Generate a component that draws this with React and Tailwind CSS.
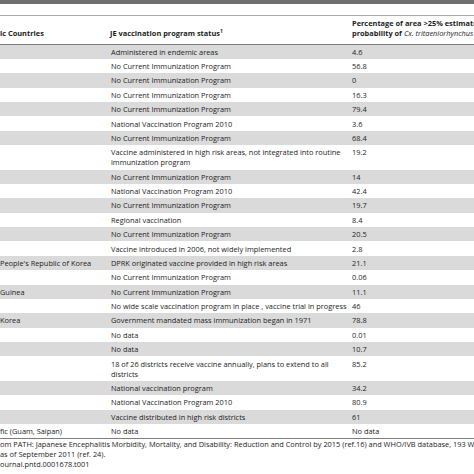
import React from 'react'

// rows: [country fragment, status, value]
const filas = [
  ['', 'Administered in endemic areas', '4.6'],
  ['', 'No Current Immunization Program', '56.8'],
  ['', 'No Current Immunization Program', '0'],
  ['', 'No Current Immunization Program', '16.3'],
  ['', 'No Current Immunization Program', '79.4'],
  ['', 'National Vaccination Program 2010', '3.6'],
  ['', 'No Current Immunization Program', '68.4'],
  ['', 'Vaccine administered in high risk areas, not integrated into routine immunization program', '19.2'],
  ['', 'No Current Immunization Program', '14'],
  ['', 'National Vaccination Program 2010', '42.4'],
  ['', 'No Current Immunization Program', '19.7'],
  ['', 'Regional vaccination', '8.4'],
  ['', 'No Current Immunization Program', '20.5'],
  ['', 'Vaccine introduced in 2006, not widely implemented', '2.8'],
  ["People's Republic of Korea", 'DPRK originated vaccine provided in high risk areas', '21.1'],
  ['', 'No Current Immunization Program', '0.06'],
  ['Guinea', 'No Current Immunization Program', '11.1'],
  ['', 'No wide scale vaccination program in place , vaccine trial in progress', '46'],
  ['Korea', 'Government mandated mass immunization began in 1971', '78.8'],
  ['', 'No data', '0.01'],
  ['', 'No data', '10.7'],
  ['', '18 of 26 districts receive vaccine annually, plans to extend to all districts', '85.2'],
  ['', 'National vaccination program', '34.2'],
  ['', 'National Vaccination Program 2010', '80.9'],
  ['', 'Vaccine distributed in high risk districts', '61'],
  ['fic (Guam, Saipan)', 'No data', 'No data'],
]

export default function App() {
  return (
    <div
      className="w-[474px] h-[474px] overflow-hidden bg-white text-[#1c1c1c] text-[7.4px] leading-[10px]"
      style={{ fontFamily: '"Open Sans", "DejaVu Sans", sans-serif' }}
    >
      <div className="h-[4px] bg-[#6f6f6f]"></div>
      <div className="h-[11px]"></div>

      {/* cabecera */}
      <div className="flex items-end border-t border-[#a8a8a8] border-b-[1.5px] border-b-[#7d7d7d] h-[29.5px] pb-[6px] font-bold">
        <div className="w-[110px] shrink-0 whitespace-nowrap">ic Countries</div>
        <div className="w-[242px] shrink-0 whitespace-nowrap">
          JE vaccination program status<sup className="text-[5px] leading-none">1</sup>
        </div>
        <div className="whitespace-nowrap">
          <div>Percentage of area &gt;25% estimated</div>
          <div>
            probability of <span className="italic font-normal">Cx. tritaeniorhynchus</span> presence
          </div>
        </div>
      </div>

      {/* filas */}
      <div className="border-b-[1.5px] border-[#7d7d7d]">
        {filas.map((f, i) => (
          <div key={i} className={`flex py-[2.2px] ${i % 2 === 0 ? 'bg-[#dadada]' : 'bg-white'}`}>
            <div className="w-[110px] shrink-0 whitespace-nowrap overflow-hidden">{f[0]}</div>
            <div className="w-[242px] shrink-0 pl-[1px] pr-[3px]">{f[1]}</div>
            <div className="whitespace-nowrap">{f[2]}</div>
          </div>
        ))}
      </div>

      {/* nota */}
      <div className="whitespace-nowrap pt-[0px]">
        <div>om PATH: Japanese Encephalitis Morbidity, Mortality, and Disability: Reduction and Control by 2015 (ref.16) and WHO/IVB database, 193 WHO Member States</div>
        <div>as of September 2011 (ref. 24).</div>
        <div>ournal.pntd.0001678.t001</div>
      </div>
    </div>
  )
}
